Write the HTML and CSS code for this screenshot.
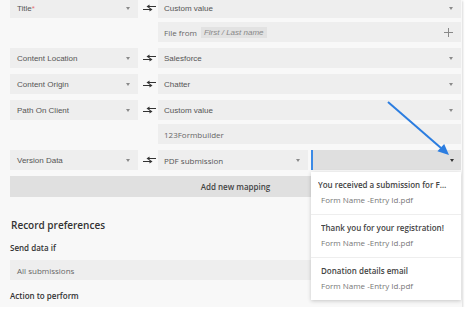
FILE: index.html
```html
<!DOCTYPE html>
<html lang="en">
<head>
  <meta charset="UTF-8">
  <title>Salesforce mapping</title>
  <link rel="stylesheet" href="styles.css">
</head>
<body>

<div class="panel">
  <div class="mappings">
    <div class="group">
      <div class="row">
        <div class="sel"><span>Title<em>*</em></span><i class="caret"></i></div>
        <svg class="swap" width="13" height="8" viewBox="0 0 13 8"><path d="M13 2.5H5.5M0 5.5h7.5" stroke="#333" stroke-width="1"/><path d="M3.5 2.5l3-2v4z M9.5 5.5l-3-2v4z" fill="#333"/></svg>
        <div class="sel val"><span>Custom value</span><i class="caret"></i></div>
      </div>
      <div class="row sub">
        <div class="field"><span class="muted">File from</span><span class="chip">First / Last name</span><i class="plus"></i></div>
      </div>
    </div>

    <div class="group">
      <div class="row">
        <div class="sel"><span>Content Location</span><i class="caret"></i></div>
        <svg class="swap" width="13" height="8" viewBox="0 0 13 8"><path d="M13 2.5H5.5M0 5.5h7.5" stroke="#333" stroke-width="1"/><path d="M3.5 2.5l3-2v4z M9.5 5.5l-3-2v4z" fill="#333"/></svg>
        <div class="sel val"><span>Salesforce</span><i class="caret"></i></div>
      </div>
    </div>

    <div class="group">
      <div class="row">
        <div class="sel"><span>Content Origin</span><i class="caret"></i></div>
        <svg class="swap" width="13" height="8" viewBox="0 0 13 8"><path d="M13 2.5H5.5M0 5.5h7.5" stroke="#333" stroke-width="1"/><path d="M3.5 2.5l3-2v4z M9.5 5.5l-3-2v4z" fill="#333"/></svg>
        <div class="sel val"><span>Chatter</span><i class="caret"></i></div>
      </div>
    </div>

    <div class="group">
      <div class="row">
        <div class="sel"><span>Path On Client</span><i class="caret"></i></div>
        <svg class="swap" width="13" height="8" viewBox="0 0 13 8"><path d="M13 2.5H5.5M0 5.5h7.5" stroke="#333" stroke-width="1"/><path d="M3.5 2.5l3-2v4z M9.5 5.5l-3-2v4z" fill="#333"/></svg>
        <div class="sel val"><span>Custom value</span><i class="caret"></i></div>
      </div>
      <div class="row sub">
        <div class="field"><span class="open">123Formbuilder</span></div>
      </div>
    </div>

    <div class="group">
      <div class="row">
        <div class="sel"><span>Version Data</span><i class="caret"></i></div>
        <svg class="swap" width="13" height="8" viewBox="0 0 13 8"><path d="M13 2.5H5.5M0 5.5h7.5" stroke="#333" stroke-width="1"/><path d="M3.5 2.5l3-2v4z M9.5 5.5l-3-2v4z" fill="#333"/></svg>
        <div class="pair">
          <div class="sel val open"><span>PDF submission</span><i class="caret"></i></div>
          <div class="picker">
            <div class="sel active"><span></span><i class="caret dark"></i></div>
            <ul class="menu">
              <li><b>You received a submission for Form Name</b><span>Form Name -Entry Id.pdf</span></li>
              <li><b>Thank you for your registration!</b><span>Form Name -Entry Id.pdf</span></li>
              <li><b>Donation details email</b><span>Form Name -Entry Id.pdf</span></li>
            </ul>
          </div>
        </div>
      </div>
    </div>
  </div>

  <div class="add-btn">Add new mapping</div>

  <h3>Record preferences</h3>
  <label>Send data if</label>
  <div class="sel wide open"><span>All submissions</span></div>
  <label>Action to perform</label>
</div>

<svg class="notes" width="474" height="310" viewBox="0 0 474 310">
  <line x1="388" y1="102" x2="441" y2="148" stroke="#2b7de0" stroke-width="2"/>
  <path d="M449 155L437.4 151.3L444.2 143.9Z" fill="#2b7de0"/>
  <line x1="316" y1="190" x2="447" y2="190" stroke="#1f6fd6" stroke-width="2"/>
  <line x1="316" y1="234" x2="445" y2="234" stroke="#1f6fd6" stroke-width="2"/>
  <line x1="314" y1="276" x2="419" y2="276" stroke="#1f6fd6" stroke-width="2"/>
</svg>

</body>
</html>
```

FILE: styles.css
```css
body { margin: 0; background: #fff; font-family: "Open Sans", sans-serif; }

.panel {
  width: 462px;
  height: 307px;
  box-sizing: border-box;
  padding: 0 1px 0 10px;
  background: #f8f8f8;
  box-shadow: 1px 1px 2px rgba(0,0,0,0.15);
  overflow: hidden;
}

.mappings { display: flex; flex-direction: column; gap: 6px; margin-top: -2px; }
.group { display: flex; flex-direction: column; gap: 4px; }
.row {
  display: grid;
  grid-template-columns: 128px 20px 303px;
  align-items: center;
}
.row.sub { grid-template-columns: 148px 303px; }
.row.sub .field { grid-column: 2; }
.swap { justify-self: center; margin-left: 2px; }

.sel, .field {
  height: 20px;
  box-sizing: border-box;
  background: #eeeeee;
  display: flex;
  align-items: center;
  padding: 0 8px 0 7px;
  font-family: "Liberation Sans", Arial, sans-serif;
  font-size: 8px;
  color: #555;
}
.sel span { flex: 1; white-space: nowrap; }
.sel em { font-style: normal; color: #e57373; }
.sel.val, .field { padding-left: 6px; }
.sel.open, .field .open, .field .muted { font-family: "Open Sans", sans-serif; }
.field .open { color: #666; }
.field .muted { color: #666; }

.caret {
  width: 0;
  height: 0;
  border-left: 2.5px solid transparent;
  border-right: 2.5px solid transparent;
  border-top: 3px solid #8a8a8a;
}
.caret.dark { border-top-color: #333; }

.chip {
  margin-left: 4px;
  padding: 1px 3px;
  background: #e2e2e2;
  font-style: italic;
  color: #888;
  flex: none;
}
.plus {
  margin-left: auto;
  width: 9px;
  height: 9px;
  background: linear-gradient(#888, #888) center / 9px 1px no-repeat,
              linear-gradient(#888, #888) center / 1px 9px no-repeat;
}

.pair { display: flex; gap: 3px; }
.pair > * { flex: none; width: 150px; }
.picker { position: relative; }
.sel.active {
  background: #dfdfdf;
  border-left: 2px solid #3b8ae6;
  padding-right: 7px;
}
.menu {
  position: absolute;
  top: 22px;
  left: 0;
  width: 150px;
  margin: 0;
  padding: 0;
  list-style: none;
  background: #fff;
  box-shadow: 0 1px 4px rgba(0,0,0,0.2);
  z-index: 5;
}
.menu li {
  display: flex;
  flex-direction: column;
  gap: 3px;
  height: 43px;
  box-sizing: border-box;
  padding: 7px 10px 0 10px;
  border-top: 1px solid #eeeeee;
  font-size: 8px;
  line-height: 12px;
}
.menu li:first-child { border-top: none; height: 42px; padding-left: 7px; }
.menu b {
  font-weight: 600;
  color: #444;
  white-space: nowrap;
  overflow: hidden;
  text-overflow: ellipsis;
}
.menu span { color: #777; }
.menu li:first-child span { padding-left: 3px; }

.add-btn {
  height: 21px;
  margin-top: 6px;
  background: #e0e0e0;
  display: flex;
  align-items: center;
  justify-content: center;
  font-size: 8px;
  font-weight: 600;
  color: #444;
}

h3 {
  margin: 21px 0 0 1px;
  font-size: 10px;
  line-height: 14px;
  font-weight: 600;
  color: #333;
}
label {
  display: block;
  margin-top: 10px;
  font-size: 8px;
  line-height: 11px;
  font-weight: 600;
  color: #333;
}
.sel.wide { margin-top: 7px; color: #666; }
.sel.wide + label { margin-top: 10px; }

.notes { position: absolute; top: 0; left: 0; pointer-events: none; }
```
